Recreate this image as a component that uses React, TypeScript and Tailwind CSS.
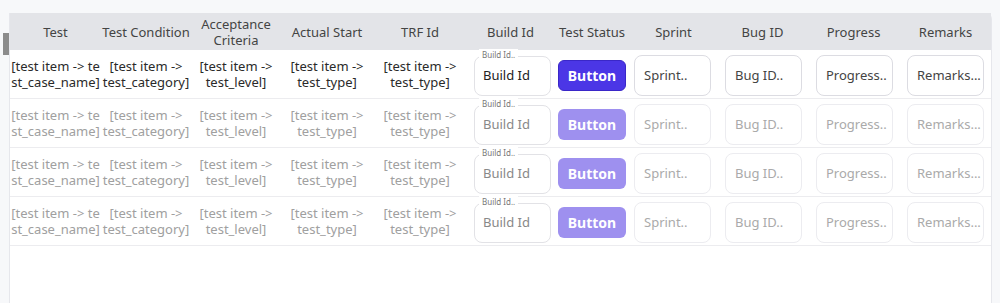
import React from 'react';

const cols = 'grid grid-cols-[91px_90px_90px_92px_94px_87px_76px_87px_91px_91px_93px]';

const headers = [
  'Test',
  'Test Condition',
  'Acceptance|Criteria',
  'Actual Start',
  'TRF Id',
  'Build Id',
  'Test Status',
  'Sprint',
  'Bug ID',
  'Progress',
  'Remarks',
];

const textCells = [
  ['[test item -> te', 'st_case_name]'],
  ['[test item ->', 'test_category]'],
  ['[test item ->', 'test_level]'],
  ['[test item ->', 'test_type]'],
  ['[test item ->', 'test_type]'],
];

const BuildInput: React.FC<{ active: boolean }> = ({ active }) => (
  <div className="relative w-[77px] h-[40px] ml-[7px] mt-[6px]">
    <div className="absolute inset-0 rounded-lg border border-[#e2e2e6]" />
    <span className="absolute -top-[7px] left-[5px] bg-white px-[3px] text-[8px] leading-[12px] text-[#777]">
      Build Id..
    </span>
    <div
      className={`absolute inset-0 flex items-center pl-[9px] text-[13px] ${
        active ? 'text-[#222]' : 'text-[#888]'
      }`}
    >
      Build Id
    </div>
  </div>
);

const PlainInput: React.FC<{ label: string; active: boolean; ml: string }> = ({ label, active, ml }) => (
  <div
    className={`${ml} mt-[5px] w-[77px] h-[41px] rounded-lg border ${
      active ? 'border-[#dcdce2] text-[#444]' : 'border-[#ececf0] text-[#aaa]'
    } flex items-center pl-[9px] text-[13px] whitespace-nowrap`}
  >
    {label}
  </div>
);

const Row: React.FC<{ active: boolean }> = ({ active }) => (
  <div className={`${cols} h-[49px] border-b border-[#ececef]`}>
    {textCells.map((t, i) => (
      <div
        key={i}
        className={`flex flex-col items-center justify-center text-[13px] leading-[16px] ${
          active ? 'text-[#2a2a2a]' : 'text-[#a0a0a0]'
        }`}
      >
        <span className="whitespace-nowrap">{t[0]}</span>
        <span className="whitespace-nowrap">{t[1]}</span>
      </div>
    ))}
    <div>
      <BuildInput active={active} />
    </div>
    <div>
      <div
        className={`ml-[4px] mt-[10px] w-[68px] h-[31px] rounded-md flex items-center justify-center text-[14px] font-bold text-white ${
          active ? 'bg-[#4b36e6] border border-[#3a27c8]' : 'bg-[#9e90ef]'
        }`}
      >
        Button
      </div>
    </div>
    <div>
      <PlainInput label="Sprint.." active={active} ml="ml-[4px]" />
    </div>
    <div>
      <PlainInput label="Bug ID.." active={active} ml="ml-[8px]" />
    </div>
    <div>
      <PlainInput label="Progress.." active={active} ml="ml-[8px]" />
    </div>
    <div>
      <PlainInput label="Remarks..." active={active} ml="ml-[8px]" />
    </div>
  </div>
);

export default function App() {
  return (
    <div
      className="h-[303px] w-[1000px] bg-[#f7f8fa] pt-[13px] flex overflow-hidden"
      style={{ fontFamily: '"Noto Sans", "Open Sans", sans-serif' }}
    >
      <div className="w-[9px] shrink-0">
        <div className="ml-[3px] mt-[20px] w-[6px] h-[22px] bg-[#8c8c8c]" />
      </div>
      <div className="w-[983px] bg-white border-x border-[#e6e7ec] rounded-tr-md">
        <div className={`${cols} h-[37px] bg-[#e3e4e8] text-[13px] leading-[16px] text-[#444]`}>
          {headers.map((h) => (
            <div key={h} className="flex flex-col items-center justify-center text-center whitespace-nowrap">
              {h.split('|').map((line) => (
                <span key={line}>{line}</span>
              ))}
            </div>
          ))}
        </div>
        <Row active />
        <Row active={false} />
        <Row active={false} />
        <Row active={false} />
      </div>
    </div>
  );
}
